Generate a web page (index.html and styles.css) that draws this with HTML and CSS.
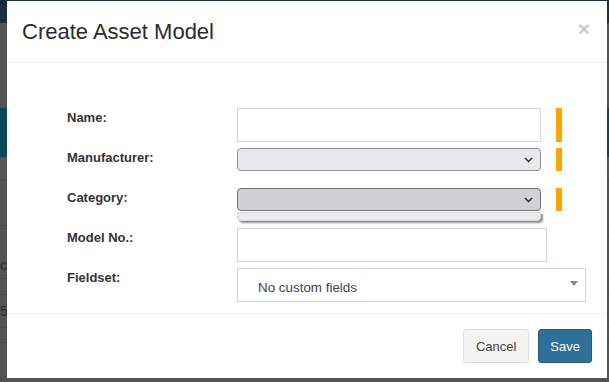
FILE: index.html
```html
<!DOCTYPE html>
<html lang="en">
<head>
    <meta charset="UTF-8">
    <meta name="viewport" content="width=device-width, initial-scale=1.0">
    <title>Create Asset Model</title>
    <link rel="stylesheet" href="styles.css">
</head>
<body>

    <!-- Page behind the modal (dimmed) -->
    <div class="page">
        <div class="page-topbar"></div>
        <div class="page-header"></div>
        <div class="page-banner"></div>
        <div class="page-table">
            <div class="tr tr-1"></div>
            <div class="tr tr-2"></div>
            <div class="tr tr-3"></div>
            <div class="tr tr-4"><span class="cell-text">c</span></div>
            <div class="tr tr-5"></div>
            <div class="tr tr-6"><span class="cell-text">5</span></div>
            <div class="tr tr-7"></div>
            <div class="tr tr-8"></div>
        </div>
    </div>

    <!-- Modal -->
    <div class="modal">
        <div class="modal-header">
            <h4 class="modal-title">Create Asset Model</h4>
            <span class="close">&times;</span>
        </div>

        <div class="modal-body">
            <div class="form-row">
                <label class="control-label">Name:</label>
                <div class="text-input"></div>
                <span class="req-bar"></span>
            </div>

            <div class="form-row">
                <label class="control-label">Manufacturer:</label>
                <div class="native-select">
                    <svg class="chevron" width="9" height="6" viewBox="0 0 9 6"><path d="M1 1 L4.5 4.5 L8 1" fill="none" stroke="#2b2b2b" stroke-width="1.4"/></svg>
                </div>
                <span class="req-bar req-bar-short"></span>
            </div>

            <div class="form-row">
                <label class="control-label">Category:</label>
                <div class="select-stack">
                    <div class="native-select is-open">
                        <svg class="chevron" width="9" height="6" viewBox="0 0 9 6"><path d="M1 1 L4.5 4.5 L8 1" fill="none" stroke="#2b2b2b" stroke-width="1.4"/></svg>
                    </div>
                    <div class="select-popup"></div>
                </div>
                <span class="req-bar req-bar-short"></span>
            </div>

            <div class="form-row">
                <label class="control-label">Model No.:</label>
                <div class="text-input text-input-wide"></div>
            </div>

            <div class="form-row">
                <label class="control-label">Fieldset:</label>
                <div class="select2-box">
                    <span class="select2-text">No custom fields</span>
                    <span class="select2-arrow"></span>
                </div>
            </div>
        </div>

        <div class="modal-footer">
            <button class="btn btn-default">Cancel</button>
            <button class="btn btn-primary">Save</button>
        </div>
    </div>

</body>
</html>
```

FILE: styles.css
```css
body {
    margin: 0;
    padding: 0;
    font-family: 'Liberation Sans', Arial, sans-serif;
    color: #333;
    overflow: hidden;
}

/* Dimmed page behind the modal */
.page {
    height: 382px;
    background-color: #535353;
}

.page-topbar {
    height: 23px;
    background-color: #172f3e;
}

.page-header {
    height: 85px;
    background-color: #535353;
}

.page-banner {
    height: 49px;
    background-color: #034957;
}

.page-table .tr {
    border-bottom: 1px solid #484848;
    font-size: 14px;
    color: #2a2a2a;
}

    .page-table .tr-1 { height: 22px; background-color: #575757; }
    .page-table .tr-2 { height: 45px; }
    .page-table .tr-3 { height: 10px; }
    .page-table .tr-4 { height: 41px; }
    .page-table .tr-5 { height: 15px; }
    .page-table .tr-6 { height: 32px; }
    .page-table .tr-7 { height: 14px; }
    .page-table .tr-8 { height: 40px; border-bottom: none; }

    .page-table .cell-text {
        display: block;
        padding-top: 20px;
    }

    .page-table .tr-6 .cell-text {
        padding-top: 8px;
    }

/* Modal */
.modal {
    position: absolute;
    top: 1px;
    left: 7px;
    width: 600px;
    height: 377px;
    background-color: #fff;
    display: flex;
    flex-direction: column;
}

.modal-header {
    display: flex;
    justify-content: space-between;
    align-items: flex-start;
    padding: 15px;
    border-bottom: 1px solid #eeeeee;
}

.modal-title {
    margin: 0;
    font-size: 22px;
    font-weight: normal;
    line-height: 31px;
    color: #2b2b2b;
}

.close {
    font-size: 21px;
    font-weight: bold;
    line-height: 21px;
    color: #c9c9c9;
    margin-top: 2px;
    margin-right: 2px;
}

.modal-body {
    display: flex;
    flex-direction: column;
    gap: 6px;
    padding: 45px 0 11px 60px;
}

.form-row {
    display: flex;
    align-items: flex-start;
    height: 34px;
}

.control-label {
    width: 170px;
    font-size: 13px;
    font-weight: bold;
    line-height: 20px;
    color: #333;
}

.text-input {
    width: 304px;
    height: 34px;
    box-sizing: border-box;
    border: 1px solid #d2d6de;
}

.text-input-wide {
    width: 310px;
}

.native-select {
    width: 304px;
    height: 23px;
    box-sizing: border-box;
    display: flex;
    align-items: center;
    justify-content: flex-end;
    padding-right: 7px;
    background-color: #e9e9ed;
    border: 1px solid #8f8f9d;
    border-radius: 4px;
}

    .native-select.is-open {
        background-color: #d0d0d7;
        border-color: #6e6e78;
    }

.select-popup {
    width: 304px;
    height: 9px;
    box-sizing: border-box;
    margin-top: 1px;
    background-color: #ebebef;
    border: 1px solid #d6d6dc;
    border-radius: 0 0 4px 4px;
    box-shadow: 2px 2px 2px rgba(0, 0, 0, 0.45);
}

.req-bar {
    width: 6px;
    height: 34px;
    margin-left: 15px;
    background-color: #ffa500;
}

.req-bar-short {
    height: 23px;
}

.select2-box {
    width: 349px;
    height: 34px;
    box-sizing: border-box;
    display: flex;
    align-items: center;
    padding-left: 20px;
    border: 1px solid #d2d6de;
}

.select2-text {
    font-size: 13.4px;
    color: #444;
    padding-top: 4px;
}

.select2-arrow {
    margin-left: auto;
    margin-right: 7px;
    margin-bottom: 4px;
    border-style: solid;
    border-width: 5px 4px 0 4px;
    border-color: #888 transparent transparent transparent;
}

.modal-footer {
    display: flex;
    justify-content: flex-end;
    gap: 9px;
    padding: 15px;
    border-top: 1px solid #f2f2f2;
}

.btn {
    height: 34px;
    padding: 0 12px;
    font-family: 'Liberation Sans', Arial, sans-serif;
    font-size: 13px;
    border-radius: 3px;
    cursor: pointer;
}

.btn-default {
    background-color: #f4f4f4;
    color: #444;
    border: 1px solid #ddd;
}

.btn-primary {
    padding: 0 11px;
    background-color: #2f7099;
    color: #fff;
    border: 1px solid #255c7e;
}
```
